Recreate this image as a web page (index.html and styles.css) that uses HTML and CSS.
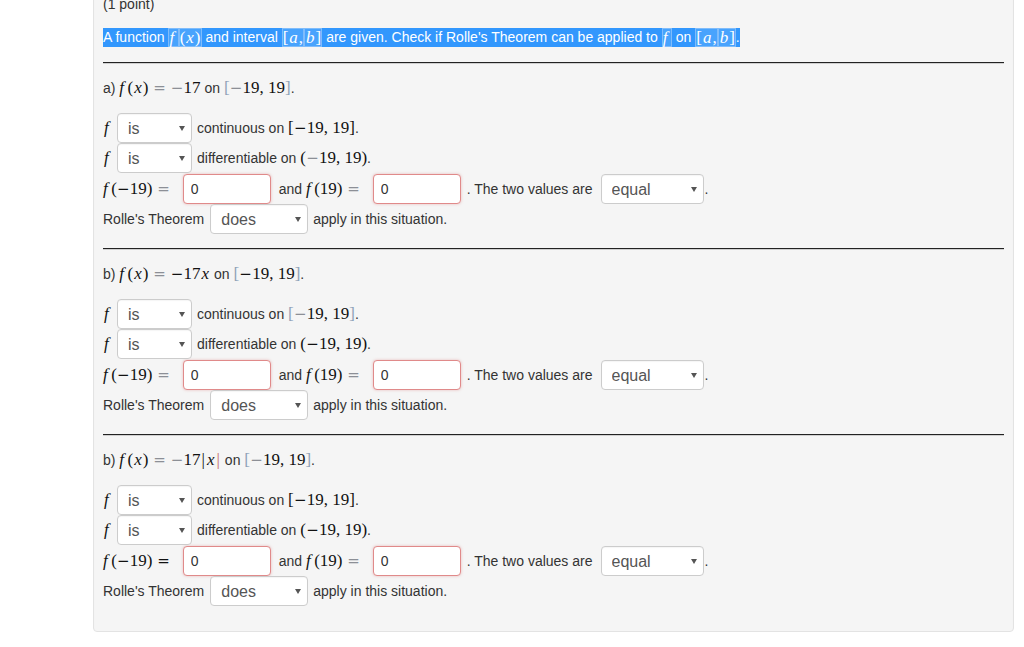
FILE: index.html
```html
<!DOCTYPE html>
<html>
<head>
<meta charset="utf-8">
<title>Rolle's Theorem</title>
<link rel="stylesheet" href="styles.css">
</head>
<body>
<div class="page">
  <div class="panel">
    <div class="points">(1 point)</div>
    <p class="intro"><span class="sel">A function <span class="mb m"><i class="f">f</i></span><span class="mb m">(<i class="v">x</i>)</span> and interval <span class="mb m">[<i class="v">a</i>,</span><span class="mb m"><i class="v">b</i>]</span> are given. Check if Rolle's Theorem can be applied to <span class="mb m"><i class="f">f</i></span> on <span class="mb m">[<i class="v">a</i>,</span><span class="mb m"><i class="v">b</i>]</span>.</span></p>

    <section class="part">
      <hr class="rule">
      <div class="head">a) <span class="m"><i class="f">f</i>(<i class="v">x</i>)<span class="eq lt">=</span><span class="mi lt">−</span>17</span> on <span class="m"><span class="lb">[</span><span class="mi lt">−</span>19, 19<span class="lb">]</span></span>.</div>
      <div class="rows">
        <div class="row">
          <span class="m fv"><i class="f">f</i></span>
          <div class="dd w-is"><select><option>is</option></select></div>
          <span class="txt">continuous on <span class="m">[<span class="mi">−</span>19, 19]</span>.</span>
        </div>
        <div class="row">
          <span class="m fv"><i class="f">f</i></span>
          <div class="dd w-is"><select><option>is</option></select></div>
          <span class="txt">differentiable on <span class="m">(<span class="mi lt">−</span>19, 19)</span>.</span>
        </div>
        <div class="row row-in">
          <span class="m"><i class="f">f</i>(<span class="mi">−</span>19)<span class="eq lt">=</span></span>
          <input class="num n1" type="text" value="0">
          <span class="txt t-and">and <span class="m"><i class="f">f</i>(19)<span class="eq lt">=</span></span></span>
          <input class="num" type="text" value="0">
          <span class="txt t-two">. The two values are</span>
          <div class="dd w-eq"><select><option>equal</option></select></div>
          <span class="dot">.</span>
        </div>
        <div class="row">
          <span class="txt">Rolle's Theorem</span>
          <div class="dd w-does"><select><option>does</option></select></div>
          <span class="txt">apply in this situation.</span>
        </div>
      </div>
    </section>

    <section class="part">
      <hr class="rule">
      <div class="head">b) <span class="m"><i class="f">f</i>(<i class="v">x</i>)<span class="eq lt">=</span><span class="mi">−</span>17<i class="v">x</i></span> on <span class="m"><span class="lb">[</span><span class="mi">−</span>19, 19<span class="lb">]</span></span>.</div>
      <div class="rows">
        <div class="row">
          <span class="m fv"><i class="f">f</i></span>
          <div class="dd w-is"><select><option>is</option></select></div>
          <span class="txt">continuous on <span class="m"><span class="lb">[</span><span class="mi lt">−</span>19, 19<span class="lb">]</span></span>.</span>
        </div>
        <div class="row">
          <span class="m fv"><i class="f">f</i></span>
          <div class="dd w-is"><select><option>is</option></select></div>
          <span class="txt">differentiable on <span class="m">(<span class="mi">−</span>19, 19)</span>.</span>
        </div>
        <div class="row row-in">
          <span class="m"><i class="f">f</i>(<span class="mi">−</span>19)<span class="eq lt">=</span></span>
          <input class="num n1" type="text" value="0">
          <span class="txt t-and">and <span class="m"><i class="f">f</i>(19)<span class="eq lt">=</span></span></span>
          <input class="num" type="text" value="0">
          <span class="txt t-two">. The two values are</span>
          <div class="dd w-eq"><select><option>equal</option></select></div>
          <span class="dot">.</span>
        </div>
        <div class="row">
          <span class="txt">Rolle's Theorem</span>
          <div class="dd w-does"><select><option>does</option></select></div>
          <span class="txt">apply in this situation.</span>
        </div>
      </div>
    </section>

    <section class="part last">
      <hr class="rule">
      <div class="head">b) <span class="m"><i class="f">f</i>(<i class="v">x</i>)<span class="eq lt">=</span><span class="mi lt">−</span>17<span class="bar">|</span><i class="v">x</i><span class="bar rd">|</span></span> on <span class="m"><span class="lb">[</span><span class="mi lt">−</span>19, 19<span class="lb">]</span></span>.</div>
      <div class="rows">
        <div class="row">
          <span class="m fv"><i class="f">f</i></span>
          <div class="dd w-is"><select><option>is</option></select></div>
          <span class="txt">continuous on <span class="m">[<span class="mi">−</span>19, 19]</span>.</span>
        </div>
        <div class="row">
          <span class="m fv"><i class="f">f</i></span>
          <div class="dd w-is"><select><option>is</option></select></div>
          <span class="txt">differentiable on <span class="m">(<span class="mi">−</span>19, 19)</span>.</span>
        </div>
        <div class="row row-in">
          <span class="m"><i class="f">f</i>(<span class="mi">−</span>19)<span class="eq">=</span></span>
          <input class="num n1" type="text" value="0">
          <span class="txt t-and">and <span class="m"><i class="f">f</i>(19)<span class="eq lt">=</span></span></span>
          <input class="num" type="text" value="0">
          <span class="txt t-two">. The two values are</span>
          <div class="dd w-eq"><select><option>equal</option></select></div>
          <span class="dot">.</span>
        </div>
        <div class="row">
          <span class="txt">Rolle's Theorem</span>
          <div class="dd w-does"><select><option>does</option></select></div>
          <span class="txt">apply in this situation.</span>
        </div>
      </div>
    </section>
  </div>
</div>
</body>
</html>
```

FILE: styles.css
```css
html, body {
  margin: 0;
  padding: 0;
  background: #ffffff;
}
body {
  font-family: "Liberation Sans", Arial, sans-serif;
  font-size: 14px;
  color: #333333;
  overflow: hidden;
}
.page {
  padding-left: 93px;
  width: 921px;
}
.panel {
  margin-top: -16px;
  background: #f5f5f5;
  border: 1px solid #e3e3e3;
  border-radius: 4px;
  box-shadow: inset 0 1px 1px rgba(0, 0, 0, 0.05);
  padding: 9px 9px 25px 9px;
}
.points {
  line-height: 20px;
  height: 20px;
}
.intro {
  display: flex;
  height: 19px;
  margin: 14px 0 15px 0;
}
.sel {
  display: block;
  background: #3297fd;
  color: #ffffff;
  line-height: 19px;
  height: 19px;
  white-space: nowrap;
}
.sel .m {
  color: #ffffff;
}
.mb {
  display: inline-block;
  height: 19px;
  box-sizing: border-box;
  background: #48a3fd;
  border: 1px solid #7fbcfb;
  line-height: 17px;
  vertical-align: top;
}
.m {
  font-family: "Liberation Serif", "Times New Roman", serif;
  font-size: 17px;
  color: #111111;
}
.m i {
  font-style: italic;
}
.m .f {
  margin-right: 3.5px;
}
.m .v {
  margin: 0 1px;
}
.eq {
  font-family: "DejaVu Serif", serif;
  font-size: 15px;
  padding: 0 4.8px;
}
.mi {
  font-family: "DejaVu Serif", serif;
  font-size: 15px;
  padding: 0 0.2px;
}
.bar {
  padding: 0 1px;
}
.lt {
  color: #8c8f96;
}
.lb {
  color: #8fa2b8;
}
.rd {
  color: #c46a6a;
}
.rule {
  margin: 0;
  height: 0;
  border: 0;
  border-top: 1px solid #222222;
  border-bottom: 1px solid #cfcfcf;
}
.head {
  margin-top: 14px;
  height: 20px;
  line-height: 20px;
  white-space: nowrap;
}
.rows {
  margin-top: 15px;
  margin-bottom: 14px;
}
.part.last .rows {
  margin-bottom: 0;
}
.row {
  display: flex;
  align-items: center;
  height: 30px;
  white-space: nowrap;
}
.row-in {
  margin-top: 1px;
}
.fv {
  width: 10px;
  padding-left: 1px;
  margin-right: 3px;
}
.fv .f {
  margin-right: 0;
}
.txt {
  margin: 0 0 0 5px;
}
.row > .txt:first-child {
  margin-left: 0;
}
.dd {
  position: relative;
  height: 30px;
  margin-left: 4px;
}
.fv + .dd {
  margin-left: 0;
}
.dd::after {
  content: "";
  position: absolute;
  right: 7px;
  top: 13px;
  border-left: 3px solid transparent;
  border-right: 3px solid transparent;
  border-top: 5px solid #555555;
}
.dd select {
  -webkit-appearance: none;
  appearance: none;
  box-sizing: border-box;
  width: 100%;
  height: 30px;
  margin: 0;
  padding: 0 0 0 10px;
  border: 1px solid #cccccc;
  border-radius: 4px;
  background: #ffffff;
  font-family: "Liberation Sans", Arial, sans-serif;
  font-size: 16px;
  color: #555555;
  box-shadow: inset 0 1px 1px rgba(0, 0, 0, 0.04);
}
.w-is { width: 75px; }
.w-does { width: 98px; margin-left: 6px; }
.w-eq { width: 103px; margin-left: 8px; }
.num {
  box-sizing: border-box;
  width: 88px;
  height: 30px;
  margin: 0 0 0 8px;
  padding: 0 0 0 7px;
  border: 1px solid #e08a8a;
  border-radius: 4px;
  background: #ffffff;
  box-shadow: 0 0 3px rgba(210, 80, 80, 0.35);
  font-family: "Liberation Sans", Arial, sans-serif;
  font-size: 14px;
  color: #333333;
}
.t-and {
  margin-left: 8px;
}
.t-two {
  margin-left: 6px;
}
.dot {
  margin-left: 1px;
}
```
